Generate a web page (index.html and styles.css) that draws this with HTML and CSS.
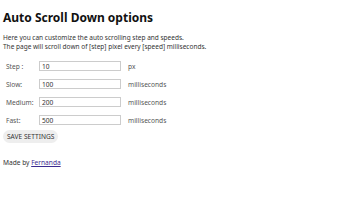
FILE: index.html
```html
<!DOCTYPE html>
<html lang="en">
<head>
  <meta charset="UTF-8" />
  <title>Auto Scroll Down options</title>
  <link rel="stylesheet" href="styles.css">
</head>
<body>
  <h1>Auto Scroll Down options</h1>
  <p class="intro">Here you can customize the auto scrolling step and speeds.<br>
    The page will scroll down of [step] pixel every [speed] milliseconds.</p>

  <div class="settings">
    <div class="row">
      <label for="step">Step :</label>
      <input type="text" id="step" value="10" />
      <span class="unit">px</span>
    </div>
    <div class="row">
      <label for="slow">Slow:</label>
      <input type="text" id="slow" value="100" />
      <span class="unit">milliseconds</span>
    </div>
    <div class="row">
      <label for="medium">Medium:</label>
      <input type="text" id="medium" value="200" />
      <span class="unit">milliseconds</span>
    </div>
    <div class="row">
      <label for="fast">Fast:</label>
      <input type="text" id="fast" value="500" />
      <span class="unit">milliseconds</span>
    </div>
  </div>

  <button class="save">SAVE SETTINGS</button>

  <p class="credits">Made by <a href="#">Fernanda</a></p>
</body>
</html>
```

FILE: styles.css
```css
body {
  font-family: "Noto Sans", sans-serif;
  margin: 0;
  padding: 0 3px;
  color: #222;
  background: white;
}
h1 {
  font-size: 12px;
  font-weight: bold;
  color: #111;
  margin: 9px 0 0;
  line-height: 18px;
}
.intro {
  font-size: 6.5px;
  line-height: 9px;
  color: #333;
  margin: 6px 0 10px;
}
.settings {
  display: flex;
  flex-direction: column;
  gap: 8px;
}
.row {
  display: flex;
  align-items: center;
  font-size: 6.6px;
  color: #555;
  height: 10px;
}
.row label {
  width: 33px;
  padding-left: 3px;
}
.row input {
  width: 82px;
  height: 10px;
  box-sizing: border-box;
  border: 1px solid #ccc;
  padding: 0 2px;
  font-family: inherit;
  font-size: 6.6px;
  color: #333;
  margin: 0 7px 0 0;
}
.save {
  display: block;
  margin-top: 5px;
  font-family: inherit;
  font-size: 6.6px;
  line-height: 7px;
  color: #333;
  background: #eee;
  border: none;
  border-radius: 7px;
  padding: 3px 4px;
}
.credits {
  font-size: 6.6px;
  margin: 15px 0 0;
  color: #333;
}
.credits a {
  color: #3b2a8f;
}
```
